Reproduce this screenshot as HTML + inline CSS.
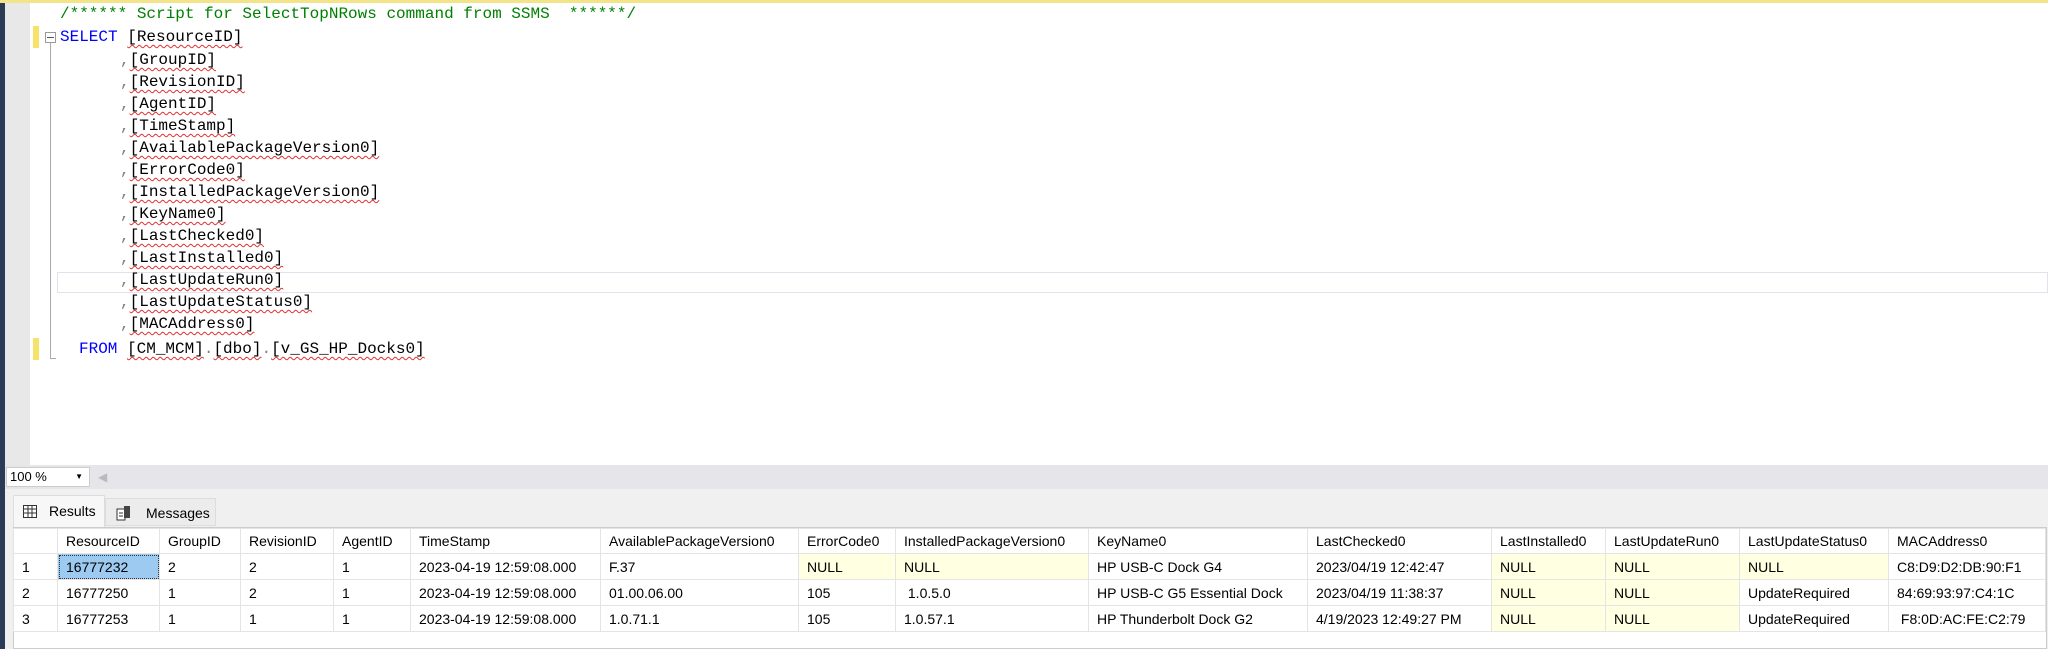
<!DOCTYPE html>
<html><head><meta charset="utf-8"><style>
*{margin:0;padding:0;box-sizing:border-box}
body{width:2048px;height:649px;position:relative;overflow:hidden;background:#fff;font-family:"Liberation Sans",sans-serif}
.abs{position:absolute}
.code{position:absolute;font-family:"Liberation Mono",monospace;font-size:16px;line-height:22px;white-space:pre;color:#000}
.sq{text-decoration:underline wavy #e03030;text-decoration-thickness:1px;text-underline-offset:3px}
.cm{color:#008000}.kw{color:#0000ff}.gr{color:#808080}
table{border-collapse:collapse;font-size:14px;position:absolute;left:13px;top:528px;table-layout:fixed}
td{border:1px solid #e4e4e4;height:26px;padding:0 0 0 8px;white-space:nowrap;overflow:hidden;color:#000}
tr.h td{height:25px}
.y{background:#ffffe1}
.sel{background:#9ccaf0;outline:1px dotted #333;outline-offset:-2px}
</style></head><body>
<div class="abs" style="left:0;top:0;width:5px;height:649px;background:#2b3a55"></div>
<div class="abs" style="left:5px;top:0;width:25px;height:465px;background:#e8e8e8"></div>
<div class="abs" style="left:0;top:0;width:2048px;height:3px;background:#f3e48a"></div>
<div class="abs" style="left:33px;top:26px;width:6px;height:22px;background:#f5e36a"></div>
<div class="abs" style="left:33px;top:338px;width:6px;height:22px;background:#f5e36a"></div>
<div class="abs" style="left:45px;top:32px;width:11px;height:11px;border:1px solid #999;background:#fff"></div>
<div class="abs" style="left:47px;top:37px;width:7px;height:1px;background:#555"></div>
<div class="abs" style="left:50px;top:43px;width:1px;height:316px;background:#aaa"></div>
<div class="abs" style="left:50px;top:358px;width:6px;height:1px;background:#aaa"></div>
<div class="abs" style="left:57px;top:272px;width:1991px;height:21px;border:1px solid #e2e2ec"></div>
<div class="code" style="left:60px;top:3px"><span class="cm">/****** Script for SelectTopNRows command from SSMS  ******/</span></div>
<div class="code" style="left:60px;top:26px"><span class="kw">SELECT</span> <span class="sq">[ResourceID]</span></div>
<div class="code" style="left:120px;top:49px"><span class="gr">,</span><span class="sq">[GroupID]</span>
<span class="gr">,</span><span class="sq">[RevisionID]</span>
<span class="gr">,</span><span class="sq">[AgentID]</span>
<span class="gr">,</span><span class="sq">[TimeStamp]</span>
<span class="gr">,</span><span class="sq">[AvailablePackageVersion0]</span>
<span class="gr">,</span><span class="sq">[ErrorCode0]</span>
<span class="gr">,</span><span class="sq">[InstalledPackageVersion0]</span>
<span class="gr">,</span><span class="sq">[KeyName0]</span>
<span class="gr">,</span><span class="sq">[LastChecked0]</span>
<span class="gr">,</span><span class="sq">[LastInstalled0]</span>
<span class="gr">,</span><span class="sq">[LastUpdateRun0]</span>
<span class="gr">,</span><span class="sq">[LastUpdateStatus0]</span>
<span class="gr">,</span><span class="sq">[MACAddress0]</span></div>
<div class="code" style="left:79px;top:338px"><span class="kw">FROM</span> <span class="sq">[CM_MCM]</span><span class="gr">.</span><span class="sq">[dbo]</span><span class="gr">.</span><span class="sq">[v_GS_HP_Docks0]</span></div>

<div class="abs" style="left:5px;top:465px;width:2043px;height:24px;background:#e6e6ea"></div>
<div class="abs" style="left:6px;top:467px;width:84px;height:20px;background:#fff;border:1px solid #ccc;font-size:13px;line-height:18px;padding-left:3px">100 %<span style="position:absolute;right:6px;font-size:8px">▼</span></div>
<div class="abs" style="left:98px;top:470px;font-size:12px;color:#bbb">◀</div>
<div class="abs" style="left:5px;top:489px;width:2043px;height:160px;background:#f0f0f0"></div>
<div class="abs" style="left:13px;top:495px;width:92px;height:33px;background:#f7f7f7;border:1px solid #ddd;border-bottom:none;font-size:14px;line-height:30px;padding-left:35px">Results
<svg style="position:absolute;left:9px;top:9px" width="14" height="13" viewBox="0 0 14 13"><rect x="0.5" y="0.5" width="13" height="12" fill="#fff" stroke="#333"/><path d="M0 4h14M0 8h14M5 0v13M9 0v13" stroke="#333"/></svg></div>
<div class="abs" style="left:105px;top:498px;width:111px;height:28px;background:#ececec;border:1px solid #ddd;font-size:14px;line-height:28px;padding-left:40px">Messages
<svg style="position:absolute;left:10px;top:6px" width="16" height="16" viewBox="0 0 16 16"><rect x="1" y="4" width="8" height="11" fill="#fff" stroke="#333"/><rect x="8" y="1" width="6" height="12" fill="#444"/><path d="M3 8h4M3 11h4" stroke="#333"/></svg></div>
<div class="abs" style="left:13px;top:527px;width:2034px;height:122px;background:#fff;border:1px solid #ccc"></div>
<table>
<colgroup><col style="width:44px"><col style="width:102px"><col style="width:81px"><col style="width:93px"><col style="width:77px"><col style="width:190px"><col style="width:198px"><col style="width:97px"><col style="width:193px"><col style="width:219px"><col style="width:184px"><col style="width:114px"><col style="width:134px"><col style="width:149px"><col style="width:157px"></colgroup>
<tr class="h"><td></td><td>ResourceID</td><td>GroupID</td><td>RevisionID</td><td>AgentID</td><td>TimeStamp</td><td>AvailablePackageVersion0</td><td>ErrorCode0</td><td>InstalledPackageVersion0</td><td>KeyName0</td><td>LastChecked0</td><td>LastInstalled0</td><td>LastUpdateRun0</td><td>LastUpdateStatus0</td><td>MACAddress0</td></tr>
<tr><td>1</td><td class="sel">16777232</td><td>2</td><td>2</td><td>1</td><td>2023-04-19 12:59:08.000</td><td>F.37</td><td class="y">NULL</td><td class="y">NULL</td><td>HP USB-C Dock G4</td><td>2023/04/19 12:42:47</td><td class="y">NULL</td><td class="y">NULL</td><td class="y">NULL</td><td>C8:D9:D2:DB:90:F1</td></tr>
<tr><td>2</td><td>16777250</td><td>1</td><td>2</td><td>1</td><td>2023-04-19 12:59:08.000</td><td>01.00.06.00</td><td>105</td><td>&nbsp;1.0.5.0</td><td>HP USB-C G5 Essential Dock</td><td>2023/04/19 11:38:37</td><td class="y">NULL</td><td class="y">NULL</td><td>UpdateRequired</td><td>84:69:93:97:C4:1C</td></tr>
<tr><td>3</td><td>16777253</td><td>1</td><td>1</td><td>1</td><td>2023-04-19 12:59:08.000</td><td>1.0.71.1</td><td>105</td><td>1.0.57.1</td><td>HP Thunderbolt Dock G2</td><td>4/19/2023 12:49:27 PM</td><td class="y">NULL</td><td class="y">NULL</td><td>UpdateRequired</td><td>&nbsp;F8:0D:AC:FE:C2:79</td></tr>
</table>
</body></html>
